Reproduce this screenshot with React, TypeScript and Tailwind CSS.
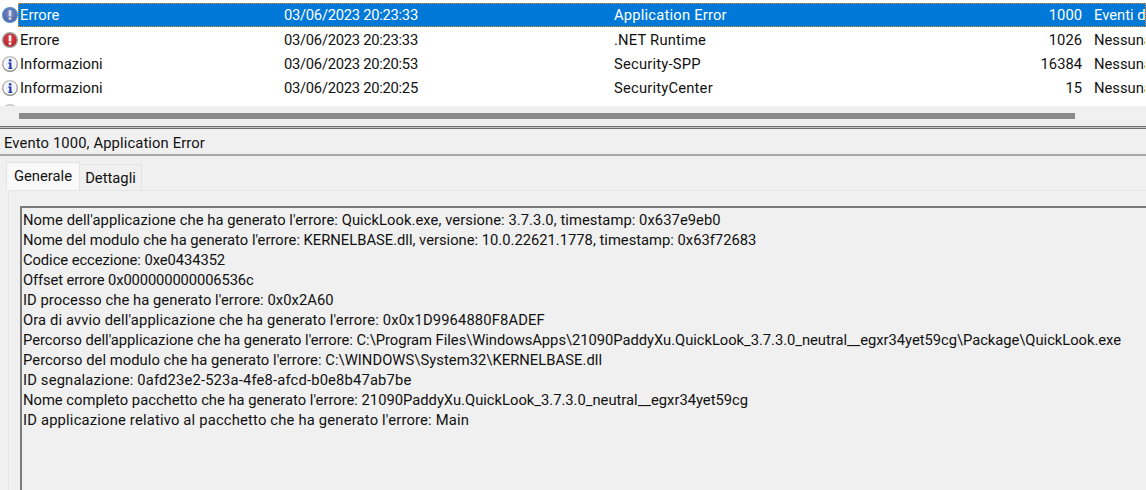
import React from "react";

type Kind = "sel" | "err" | "info";

function StatusIcon({ kind }: { kind: Kind }) {
  const id = `g-${kind}`;
  if (kind === "info") {
    return (
      <svg width="16" height="16" viewBox="0 0 16 16" className="shrink-0">
        <defs>
          <linearGradient id={id} x1="0" y1="0" x2="0" y2="1">
            <stop offset="0" stopColor="#c4c4c4" />
            <stop offset="1" stopColor="#8a8a8a" />
          </linearGradient>
        </defs>
        <circle cx="8" cy="8" r="7.3" fill="#ffffff" stroke={`url(#${id})`} strokeWidth="1.4" />
        <circle cx="8" cy="8" r="5.4" fill="#eef1fa" />
        <path d="M6.4 6.6h3v5.2h0.9v1.2h-3.9v-1.2h0.9v-4h-0.9z" fill="#2438b0" />
        <rect x="6.9" y="3.2" width="2.5" height="2.3" fill="#2438b0" />
      </svg>
    );
  }
  const sel = kind === "sel";
  return (
    <svg width="16" height="16" viewBox="0 0 16 16" className="shrink-0">
      <defs>
        <radialGradient id={id} cx="0.5" cy="0.4" r="0.65">
          <stop offset="0" stopColor={sel ? "#7f8cc4" : "#e8444a"} />
          <stop offset="1" stopColor={sel ? "#4a5d9e" : "#ad1c24"} />
        </radialGradient>
      </defs>
      <circle cx="8" cy="8" r="7.3" fill={`url(#${id})`} stroke={sel ? "#4f8ac8" : "#a0a0a0"} strokeWidth="1.4" />
      <rect x="6.7" y="3.2" width="2.6" height="6.2" fill={sel ? "#d8def2" : "#ffffff"} />
      <rect x="6.7" y="10.4" width="2.6" height="2.4" fill={sel ? "#d8def2" : "#ffffff"} />
    </svg>
  );
}

const rows: { kind: Kind; level: string; date: string; source: string; id: string; cat: string }[] = [
  { kind: "sel", level: "Errore", date: "03/06/2023 20:23:33", source: "Application Error", id: "1000", cat: "Eventi d" },
  { kind: "err", level: "Errore", date: "03/06/2023 20:23:33", source: ".NET Runtime", id: "1026", cat: "Nessuna" },
  { kind: "info", level: "Informazioni", date: "03/06/2023 20:20:53", source: "Security-SPP", id: "16384", cat: "Nessuna" },
  { kind: "info", level: "Informazioni", date: "03/06/2023 20:20:25", source: "SecurityCenter", id: "15", cat: "Nessuna" },
];

const lines: { t: string; c: string }[] = [
  { t: "Nome dell'applicazione che ha generato l'errore: QuickLook.exe, versione: 3.7.3.0, timestamp: 0x637e9eb0", c: "tracking-[0.06px]" },
  { t: "Nome del modulo che ha generato l'errore: KERNELBASE.dll, versione: 10.0.22621.1778, timestamp: 0x63f72683", c: "" },
  { t: "Codice eccezione: 0xe0434352", c: "tracking-[-0.07px]" },
  { t: "Offset errore 0x000000000006536c", c: "tracking-[-0.12px]" },
  { t: "ID processo che ha generato l'errore: 0x0x2A60", c: "tracking-[0.06px]" },
  { t: "Ora di avvio dell'applicazione che ha generato l'errore: 0x0x1D9964880F8ADEF", c: "tracking-[0.13px]" },
  { t: "Percorso dell'applicazione che ha generato l'errore: C:\\Program Files\\WindowsApps\\21090PaddyXu.QuickLook_3.7.3.0_neutral__egxr34yet59cg\\Package\\QuickLook.exe", c: "tracking-[-0.03px]" },
  { t: "Percorso del modulo che ha generato l'errore: C:\\WINDOWS\\System32\\KERNELBASE.dll", c: "tracking-[0.05px]" },
  { t: "ID segnalazione: 0afd23e2-523a-4fe8-afcd-b0e8b47ab7be", c: "tracking-[0.17px]" },
  { t: "Nome completo pacchetto che ha generato l'errore: 21090PaddyXu.QuickLook_3.7.3.0_neutral__egxr34yet59cg", c: "" },
  { t: "ID applicazione relativo al pacchetto che ha generato l'errore: Main", c: "tracking-[0.19px]" },
];

export default function App() {
  return (
    <div className="w-[1146px] h-[490px] overflow-hidden bg-[#f0f0f0] flex flex-col text-[14.75px] text-[#111] font-['Roboto',sans-serif]">
      <div className="h-[106px] shrink-0 overflow-hidden bg-white pt-[3px]">
        {rows.map((r, i) => (
          <div key={i} className={i === 0 ? "h-6 mb-px flex items-center pl-[2px]" : "h-6 flex items-center pl-[2px]"}>
            <StatusIcon kind={r.kind} />
            <div
              className={
                r.kind === "sel"
                  ? "flex-1 h-6 flex items-center pl-px bg-[#0078d7] text-white border border-dotted border-[#e8902a] whitespace-nowrap overflow-hidden"
                  : "flex-1 h-6 flex items-center pl-px border border-transparent whitespace-nowrap overflow-hidden"
              }
            >
              <span className="w-[264px] shrink-0">{r.level}</span>
              <span className="w-[330px] shrink-0 tracking-[-0.27px]">{r.date}</span>
              <span className="w-[401px] shrink-0 tracking-[0.2px]">{r.source}</span>
              <span className="w-[67px] shrink-0 text-right">{r.id}</span>
              <span className="ml-[12px] shrink-0">{r.cat}</span>
            </div>
          </div>
        ))}
        <div className="h-6 flex items-center pl-[2px]">
          <StatusIcon kind="info" />
        </div>
      </div>

      <div className="h-5 shrink-0 bg-[#f0f0f0] pl-[19px] pr-[71px] pt-[7px]">
        <div className="h-[6px] bg-[#8a8a8a]" />
      </div>

      <div className="h-[3px] shrink-0 border-y border-[#6d6d6d] bg-[#c8c8c8]" />

      <div className="h-[27px] shrink-0 border-b-2 border-[#a8a8a8] pl-1 pt-[3px] flex items-center tracking-[0.13px]">Evento 1000, Application Error</div>

      <div className="flex flex-col flex-1 pl-[6px] pt-[6px] min-h-0">
        <div className="flex items-end h-[28px] shrink-0">
          <div className="w-[74px] h-[28px] bg-[#f9f9f9] border border-b-0 border-[#e3e3e3] flex items-center justify-center">Generale</div>
          <div className="w-[62px] h-[26px] bg-[#f0f0f0] border border-b-0 border-l-0 border-[#e3e3e3] flex items-center justify-center pt-px">Dettagli</div>
        </div>
        <div className="flex-1 ml-[2px] border-t border-l border-[#e6e6e6] pl-[11px] pt-[15px] min-h-0">
          <div className="h-[400px] border-t-2 border-l-2 border-[#7a7a7a] pl-[1px] pt-[2px]">
            {lines.map((l, i) => (
              <div key={i} className={`h-5 leading-5 whitespace-nowrap ${l.c}`}>{l.t}</div>
            ))}
          </div>
        </div>
      </div>
    </div>
  );
}
